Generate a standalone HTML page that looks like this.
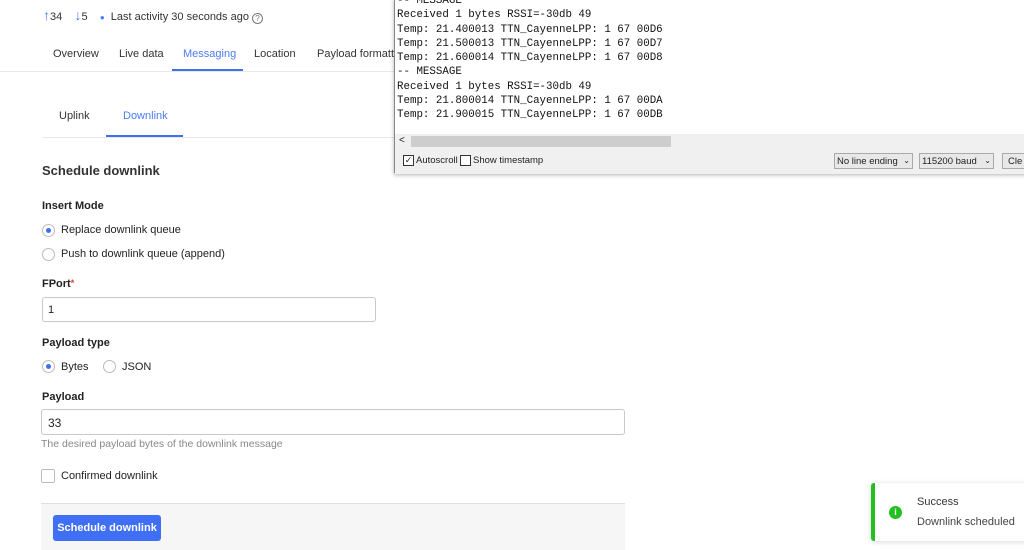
<!DOCTYPE html>
<html><head><meta charset="utf-8"><style>
*{box-sizing:border-box;margin:0;padding:0}
body{width:1024px;height:550px;overflow:hidden;background:#fff;font-family:"Liberation Sans",sans-serif;color:#222;position:relative;font-size:11px}
.a{position:absolute;white-space:nowrap}
.radio{position:absolute;width:13px;height:13px;border:1px solid #bbb;border-radius:50%;background:#fff}
.radio.on::after{content:"";position:absolute;left:3px;top:3px;width:5px;height:5px;border-radius:50%;background:#3f6ff5}
.lbl{font-size:11px;color:#222}
.input{position:absolute;border:1px solid #c8c8c8;border-radius:3px;background:#fff}
#mon{position:absolute;left:394px;top:-2px;width:640px;height:175px;border:1px solid #888;background:#fff;box-shadow:0 2px 4px rgba(0,0,0,.3)}
#mon pre{font-family:"Liberation Mono","Courier New",monospace;font-size:10.8px;line-height:14.3px;color:#111;position:absolute;left:2px;top:-5px}
</style></head><body>
<div class="a" style="left:43px;top:10px;font-size:11px;color:#333"><span style="color:#4a7bf5;font-size:14px;line-height:11px">↑</span>34 &nbsp;&nbsp;&nbsp;<span style="color:#4a7bf5;font-size:14px;line-height:11px">↓</span>5 &nbsp;&nbsp;&nbsp;<span style="color:#4a7bf5;font-size:8px">●</span>&nbsp; Last activity 30 seconds ago <span style="display:inline-block;width:11px;height:11px;border:1px solid #777;border-radius:50%;font-size:8px;text-align:center;line-height:9px;color:#777;vertical-align:-1px">?</span></div>
<div class="a" style="left:53px;top:48px;color:#333">Overview</div>
<div class="a" style="left:119px;top:48px;color:#333">Live data</div>
<div class="a" style="left:183px;top:48px;color:#4a7bf5">Messaging</div>
<div class="a" style="left:254px;top:48px;color:#333">Location</div>
<div class="a" style="left:317px;top:48px;color:#333">Payload formatte</div>
<div class="a" style="left:172px;top:69px;width:71px;height:2px;background:#3f6ff5"></div>
<div class="a" style="left:0;top:71px;width:394px;height:1px;background:#e8e8e8"></div>
<div class="a" style="left:59px;top:110px;color:#333">Uplink</div>
<div class="a" style="left:123px;top:110px;color:#4a7bf5">Downlink</div>
<div class="a" style="left:106px;top:135px;width:77px;height:2px;background:#3f6ff5"></div>
<div class="a" style="left:42px;top:137px;width:352px;height:1px;background:#e8e8e8"></div>
<div class="a" style="left:42px;top:163px;font-size:13px;font-weight:bold;color:#333">Schedule downlink</div>
<div class="a lbl" style="left:42px;top:200px;font-weight:bold">Insert Mode</div>
<div class="radio on" style="left:42px;top:224px"></div><div class="a lbl" style="left:61px;top:224px">Replace downlink queue</div>
<div class="radio" style="left:42px;top:248px"></div><div class="a lbl" style="left:61px;top:248px">Push to downlink queue (append)</div>
<div class="a lbl" style="left:42px;top:278px;font-weight:bold">FPort<span style="color:#e33;font-size:9px;vertical-align:top">*</span></div>
<div class="input" style="left:42px;top:297px;width:334px;height:25px"><span class="a" style="left:5px;top:6px">1</span></div>
<div class="a lbl" style="left:42px;top:337px;font-weight:bold">Payload type</div>
<div class="radio on" style="left:42px;top:360px"></div><div class="a lbl" style="left:61px;top:361px">Bytes</div>
<div class="radio" style="left:103px;top:360px"></div><div class="a lbl" style="left:122px;top:361px">JSON</div>
<div class="a lbl" style="left:42px;top:391px;font-weight:bold">Payload</div>
<div class="input" style="left:41px;top:409px;width:584px;height:26px"><span class="a" style="left:6px;top:6px;font-size:12px">33</span></div>
<div class="a" style="left:41px;top:438px;color:#888;font-size:10.5px">The desired payload bytes of the downlink message</div>
<div class="a" style="left:41px;top:469px;width:14px;height:14px;border:1px solid #bbb;border-radius:2px"></div>
<div class="a lbl" style="left:61px;top:470px">Confirmed downlink</div>
<div class="a" style="left:41px;top:503px;width:584px;height:47px;background:#f6f6f6;border-top:1px solid #e0e0e0"></div>
<div class="a" style="left:53px;top:515px;width:108px;height:26px;background:#3f6ff5;border-radius:3px;color:#fff;font-weight:bold;font-size:11px;text-align:center;line-height:26px">Schedule downlink</div>
<div id="mon">
<pre>-- MESSAGE
Received 1 bytes RSSI=-30db 49
Temp: 21.400013 TTN_CayenneLPP: 1 67 00D6
Temp: 21.500013 TTN_CayenneLPP: 1 67 00D7
Temp: 21.600014 TTN_CayenneLPP: 1 67 00D8
-- MESSAGE
Received 1 bytes RSSI=-30db 49
Temp: 21.800014 TTN_CayenneLPP: 1 67 00DA
Temp: 21.900015 TTN_CayenneLPP: 1 67 00DB</pre>
<div class="a" style="left:0;top:135px;width:640px;height:15px;background:#f0f0f0"></div>
<div class="a" style="left:4px;top:136px;font-size:10px">&lt;</div>
<div class="a" style="left:16px;top:137px;width:260px;height:11px;background:#cdcdcd"></div>
<div class="a" style="left:0;top:150px;width:640px;height:25px;background:#f0f0f0"></div>
<div class="a" style="left:8px;top:156px;width:11px;height:11px;border:1px solid #333;background:#fff;font-size:9px;line-height:9px;text-align:center">✓</div>
<div class="a" style="left:21px;top:156px;font-size:9.5px">Autoscroll</div>
<div class="a" style="left:65px;top:156px;width:11px;height:11px;border:1px solid #333;background:#fff"></div>
<div class="a" style="left:78px;top:156px;font-size:9.5px">Show timestamp</div>
<div class="a" style="left:439px;top:154px;width:79px;height:16px;border:1px solid #aaa;background:#e8e8e8;font-size:9.5px;padding:2px 2px">No line ending <span style="float:right;font-size:8px">⌄</span></div>
<div class="a" style="left:524px;top:154px;width:75px;height:16px;border:1px solid #aaa;background:#e8e8e8;font-size:9.5px;padding:2px 2px">115200 baud <span style="float:right;font-size:8px">⌄</span></div>
<div class="a" style="left:607px;top:154px;width:40px;height:16px;border:1px solid #aaa;background:#e8e8e8;font-size:9.5px;padding:2px 5px">Cle</div>
</div>
<div class="a" style="left:871px;top:483px;width:160px;height:58px;background:#fff;border-left:4px solid #22c11f;border-radius:3px;box-shadow:0 1px 6px rgba(0,0,0,.15)"></div>
<div class="a" style="left:889px;top:506px;width:13px;height:13px;border-radius:50%;background:#22c11f;color:#fff;font-size:9px;font-weight:bold;text-align:center;line-height:13px">i</div>
<div class="a" style="left:917px;top:496px;font-size:11px;color:#333">Success</div>
<div class="a" style="left:917px;top:516px;font-size:11px;color:#444">Downlink scheduled</div>
</body></html>
